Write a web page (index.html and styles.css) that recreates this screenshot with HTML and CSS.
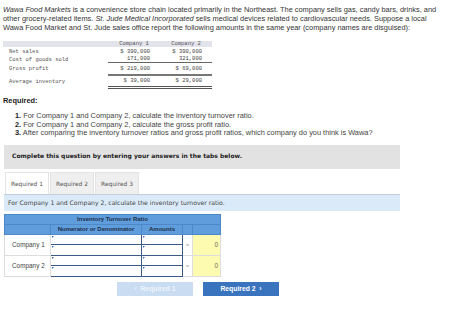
FILE: index.html
```html
<!DOCTYPE html>
<html lang="en">
<head>
  <meta charset="UTF-8" />
  <title>Wawa Food Markets</title>
  <link rel="stylesheet" href="styles.css">
</head>
<body>
  <p class="intro"><em>Wawa Food Markets</em> is a convenience store chain located primarily in the Northeast. The company sells gas, candy bars, drinks, and other grocery-related items. <em>St. Jude Medical Incorporated</em> sells medical devices related to cardiovascular needs. Suppose a local Wawa Food Market and St. Jude sales office report the following amounts in the same year (company names are disguised):</p>

  <table class="facts">
    <thead>
      <tr><th></th><th>Company 1</th><th>Company 2</th></tr>
    </thead>
    <tbody>
      <tr class="net"><td>Net sales</td><td>$ 390,000</td><td>$ 390,000</td></tr>
      <tr class="cogs"><td>Cost of goods sold</td><td>171,000</td><td>321,000</td></tr>
      <tr class="gp"><td>Gross profit</td><td>$ 219,000</td><td>$ 69,000</td></tr>
      <tr class="avg"><td>Average inventory</td><td>$ 39,000</td><td>$ 29,000</td></tr>
    </tbody>
  </table>

  <p class="req-title">Required:</p>
  <ol class="req-list">
    <li><b>1.</b> For Company 1 and Company 2, calculate the inventory turnover ratio.</li>
    <li><b>2.</b> For Company 1 and Company 2, calculate the gross profit ratio.</li>
    <li><b>3.</b> After comparing the inventory turnover ratios and gross profit ratios, which company do you think is Wawa?</li>
  </ol>

  <div class="notice">Complete this question by entering your answers in the tabs below.</div>

  <div class="tabs">
    <div class="tab active">Required 1</div>
    <div class="tab">Required 2</div>
    <div class="tab">Required 3</div>
  </div>
  <div class="prompt">For Company 1 and Company 2, calculate the inventory turnover ratio.</div>

  <table class="answer">
    <tr class="h1"><th colspan="5">Inventory Turnover Ratio</th></tr>
    <tr class="h2"><th class="blank"></th><th>Numerator or Denominator</th><th>Amounts</th><th></th><th></th></tr>
    <tr>
      <td class="name">Company 1</td>
      <td class="pair"><div class="field"></div><div class="field"></div></td>
      <td class="pair"><div class="field"></div><div class="field"></div></td>
      <td class="eq">=</td>
      <td class="result">0</td>
    </tr>
    <tr>
      <td class="name">Company 2</td>
      <td class="pair"><div class="field"></div><div class="field"></div></td>
      <td class="pair"><div class="field"></div><div class="field"></div></td>
      <td class="eq">=</td>
      <td class="result">0</td>
    </tr>
  </table>

  <div class="nav">
    <button class="btn prev" disabled>&lsaquo;&nbsp;&nbsp;Required 1</button>
    <button class="btn next">Required 2&nbsp;&nbsp;&rsaquo;</button>
  </div>
</body>
</html>
```

FILE: styles.css
```css
body {
  margin: 0;
  padding: 6px 0 0 3px;
  font-family: "Liberation Sans", Arial, sans-serif;
  color: #333;
  background: #fff;
}

.intro {
  margin: 0;
  width: 445px;
  font-size: 7.4px;
  line-height: 8.8px;
}

/* data table */
.facts {
  margin-top: 9px;
  border-collapse: collapse;
  font-family: "Liberation Mono", monospace;
  font-size: 5.5px;
  color: #444;
}

.facts th {
  background: #e3e3ec;
  font-weight: normal;
  height: 6px;
  padding: 0;
  line-height: 6px;
  color: #555;
}

.facts td {
  padding: 0;
  text-align: right;
  line-height: 6px;
}

.facts td:first-child {
  text-align: left;
  padding-left: 6px;
  width: 99px;
  color: #555;
}

.facts th:nth-child(2) { width: 52px; }
.facts th:nth-child(3) { width: 52px; }

.facts td:nth-child(2) { padding-right: 10px; }
.facts td:nth-child(3) { padding-right: 10px; }

.facts .net td { height: 9px; }
.facts .cogs td { height: 6px; }
.facts .cogs td:nth-child(n+2) { border-bottom: 1px solid #666; }
.facts .gp td { height: 11px; }
.facts .gp td:nth-child(n+2) { border-bottom: 2px solid #777; }
.facts .avg td { height: 10px; }
.facts .avg td:nth-child(n+2) { border-bottom: 3px double #555; }

.req-title {
  margin: 7px 0 0;
  font-size: 7.4px;
  font-weight: bold;
  color: #222;
}

.req-list {
  list-style: none;
  margin: 7px 0 0;
  padding-left: 12px;
  font-size: 7.4px;
  line-height: 8.4px;
  color: #444;
}

.req-list b { color: #222; }

.notice {
  margin: 7px 0 0 1px;
  width: 388px;
  height: 24px;
  padding-left: 8px;
  background: #e2e2e2;
  font-family: "DejaVu Sans", Verdana, sans-serif;
  font-weight: bold;
  font-size: 6px;
  line-height: 21px;
  color: #222;
}

.tabs {
  display: flex;
  margin: 3px 0 0 2px;
  font-family: "DejaVu Sans", Verdana, sans-serif;
  font-size: 5.9px;
  color: #555;
}

.tab {
  width: 42px;
  height: 21px;
  line-height: 22px;
  text-align: center;
  background: #efefef;
  border: 1px solid #e4e4e4;
  border-bottom: none;
  margin-right: 1px;
}

.tab.active {
  background: #fff;
}

.prompt {
  margin-left: 1px;
  width: 392px;
  height: 16px;
  padding-left: 4px;
  background: #dbeaf8;
  border-top: 1px solid #c5ced8;
  font-family: "DejaVu Sans", Verdana, sans-serif;
  font-size: 6.1px;
  line-height: 16px;
  color: #444;
}

/* answer grid */
.answer {
  margin: 3px 0 0 1px;
  border-collapse: collapse;
  font-size: 6.4px;
}

.answer th {
  background: #5f9ddc;
  border: 1px solid #4d89c9;
  color: #1d2f4a;
  font-family: "Liberation Sans", Arial, sans-serif;
  font-weight: bold;
  font-size: 6px;
  padding: 0;
}

.answer .h1 th { height: 9px; }
.answer .h2 th { height: 9px; }

.answer .h2 th:nth-child(2) { width: 90px; }
.answer .h2 th:nth-child(3) { width: 40px; }
.answer .h2 th:nth-child(4) { width: 9px; }
.answer .h2 th:nth-child(5) { width: 27px; }

.answer .blank { width: 45px; }

.answer td {
  border: 1px solid #ddd;
  padding: 0;
  height: 20px;
  color: #555;
}

.answer .name {
  padding-left: 7px;
  color: #444;
}

.answer .pair {
  border: 1px solid #3c5a86;
  vertical-align: top;
}

.field {
  position: relative;
  height: 9px;
  border-bottom: 1px solid #3c5a86;
}

.field:last-child {
  border-bottom: none;
  height: 10px;
}

.field::before {
  content: "";
  position: absolute;
  left: 1px;
  top: 1px;
  border-left: 2px solid #2d6bd0;
  border-bottom: 2px solid transparent;
}

.answer .eq {
  text-align: center;
  color: #999;
  font-size: 5px;
}

.answer .result {
  background: #fdfbb0;
  text-align: right;
  padding-right: 2px;
  color: #666;
}

.nav {
  display: flex;
  gap: 10px;
  margin: 5px 0 0 114px;
}

.btn {
  width: 76px;
  height: 14px;
  border: none;
  padding: 0;
  font-family: "Liberation Sans", Arial, sans-serif;
  font-size: 6.8px;
  font-weight: bold;
  color: #fff;
}

.btn.prev {
  background: #c9dcf1;
  color: #eef4fb;
}

.btn.next {
  background: #3a73be;
}
```
